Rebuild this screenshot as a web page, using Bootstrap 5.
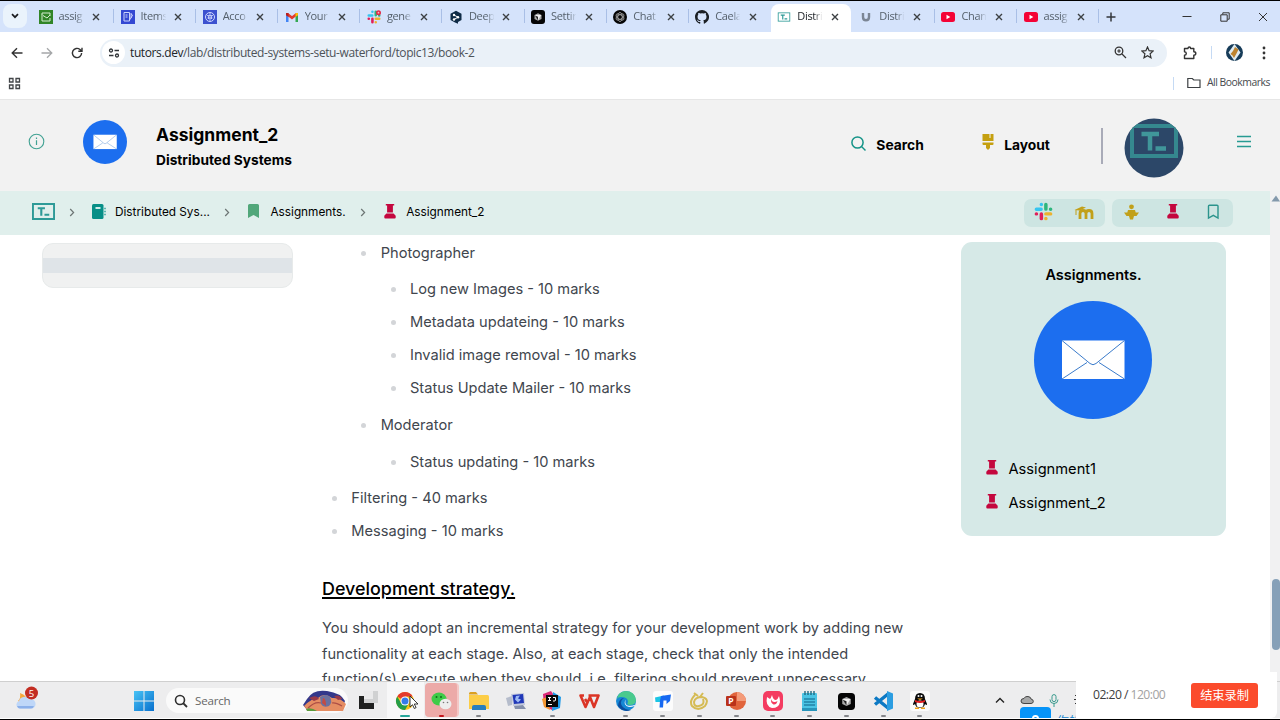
<!DOCTYPE html>
<html lang="en">
<head>
<meta charset="utf-8">
<meta name="viewport" content="width=device-width, initial-scale=1">
<title>Assignment_2 - Distributed Systems</title>
<link href="https://cdn.jsdelivr.net/npm/bootstrap@5.3.0/dist/css/bootstrap.min.css" rel="stylesheet">
<style>
html,body{height:720px;overflow:hidden}
body{font-family:Inter,sans-serif;font-size:14.67px;line-height:1.5;color:#000;background:#000;width:1280px}
svg{display:block;flex:none}
.sys{font-family:"Open Sans","Noto Sans",sans-serif}
.screen{height:717.5px;margin-top:1px;background:#fff}
/* browser chrome */
.tabstrip{height:31px;background:#d5e3fb;padding-left:2px}
.tabmenu{width:24px;height:24px;margin:3px 5px 0 1px;background:#eaf3fc;border-radius:8px}
.tab{width:82.1px;height:31px;padding-left:6.5px;font-size:11px;letter-spacing:-.35px;color:#55606b;flex:none;position:relative}
.tab span{width:26px;margin-left:6px;overflow:hidden;white-space:nowrap;-webkit-mask-image:linear-gradient(90deg,#000 65%,transparent 98%);mask-image:linear-gradient(90deg,#000 65%,transparent 98%)}
.tab .x{margin-left:7.5px}
.tab::after{content:"";position:absolute;right:0;top:8px;height:14px;width:1px;background:#a9bfe6}
.tab.on{background:#fff;border-radius:8px 8px 0 0;height:28px;margin-top:3px;color:#202429;width:80px;margin-right:2px;margin-left:0}
.tab.on>*{margin-top:-3px}
.tab.on::after,.tab.pre::after{display:none}
.toolbar{height:41px;padding:0 11px}
.urlbar{height:28px;width:1067px;border-radius:14px;background:#eaf1f8;margin-left:17px;padding-left:2px;padding-right:13px}
.site{width:23px;height:23px;background:#fff}
.url{font-size:12px;letter-spacing:-.39px;color:#4d5358;margin-left:5px;margin-top:1px;white-space:nowrap}
.url b{font-weight:400;color:#202428}
.bookmarks{height:26.5px;border-bottom:1px solid #e6e6e6;padding:0 10px 5px 8px;font-size:10.4px;color:#46494d}
.bookmarks span{letter-spacing:-.48px}
.vline{width:1px;background:#c5daf4}
/* course header */
.course{height:91.5px;background:#f2f2f2;font-weight:700;font-size:13.8px}
.brandtext{margin-left:28.8px;width:680.7px;padding-top:21px}
.brandtext h1{font-size:17.5px;line-height:28px;font-weight:700;margin:0}
.brandtext p{font-size:13.7px;line-height:23px;margin:0}
.split{width:2px;height:36px;background:#a9abb8;margin-top:28px}
.trail{height:44px;background:#e0efec;width:1270px;padding-left:32px;font-size:11.8px;white-space:nowrap}
.trail .icon{margin-top:-4px}
.pill{height:28px;background:#cde5e2;border-radius:7px}
/* page */
.page{height:446px;overflow:hidden;width:1270px}
.toc{width:251px;height:45px;margin:7.500px 0 0 42px;border:1px solid #e7eaea;border-radius:11px;background:#f0f1f1;overflow:hidden}
.toc div{height:15px;margin-top:14px;background:#dfe4e8}
.prose{width:600px;margin-left:29px;padding-top:5.7px;font-size:14.62px;line-height:25.67px;color:#41464e;white-space:nowrap}
.prose ul{list-style:none;padding:0;margin:0}
.prose ul ul{padding-left:29.33px;margin-top:11px;margin-bottom:11px}
.prose li{position:relative;padding-left:29.33px;margin:7.33px 0}
.prose ul ul>li{padding-left:0}
.prose li::before{content:"";position:absolute;left:10px;top:10px;width:5px;height:5px;border-radius:50%;background:#d3d5d8}
.prose ul ul>li::before{left:-19.3px}
.prose li.parent::before{display:none}
.prose h3{font-size:17.9px;line-height:28px;font-weight:500;color:#000;text-decoration:underline;text-underline-offset:2px;text-decoration-thickness:1.5px;margin:29.8px 0 13.2px}
.prose p{font-size:14.59px}
.topic{width:265px;height:294px;margin:7.4px 0 0 39px;border-radius:11px;background:#d6e9e7;padding-top:21.8px}
.topic h2{font-size:14.5px;font-weight:600;line-height:22px;margin:0 0 14.5px;text-align:center}
.topic a{color:#000;text-decoration:none;height:33.5px;padding-left:25px}
.topic a svg{margin:-3px 10.5px 0 0}
.scrollcol{width:10px;height:490px;background:#f1f1f2}
.thumb{width:8px;height:71px;border-radius:4px;background:#86a0b8;margin:374px 0 0 2px}
/* desktop */
.taskbar{height:37px;background:#ededee;border-top:1px solid #cfcfcf;position:relative}
.find{width:182px;height:25px;border-radius:13px;background:#fafafa;font-size:11.6px;letter-spacing:-.2px;color:#666}
.app{width:36.75px;height:36px;flex:none;position:relative;padding-top:2px}
.app::after{content:"";position:absolute;bottom:1px;width:5px;height:2px;border-radius:1px;background:#84868a}
.app.none::after{display:none}
.app.cur{background:#f7f7f8}
.app.cur::after{width:10px;background:#26a69a}
.app.hot{background:#ecaaa8;border-radius:4px;border-right:2px solid #f4c7c5;margin:0 1.4px 0 1.4px;width:34px;height:34px}
.app.hot::after{background:#c4161c;bottom:0}
.pointer{left:409px;top:13px}
.rec{position:absolute;left:1076px;top:-10px;width:201px;height:46px;background:#fff;border-radius:0 0 6px 0;font-size:12.2px;letter-spacing:-.55px;color:#3d3d3d;padding:2px 19px 2px 17px}
.rec button{width:67px;height:25px;border:0;border-radius:3px;background:#fb4b2c;color:#fff;font:12.2px/25px "Noto Sans CJK SC",sans-serif;letter-spacing:0;padding:0}
.toast-peek{position:absolute;left:1020px;top:25px;width:130px;height:11px;overflow:hidden;color:#1684cd;font:12px/18px "Noto Sans CJK SC",sans-serif}
.toast-peek i{width:31px;height:22px;border-radius:4px;background:#0794f8;flex:none}
.toast-peek i::before{content:"";display:block;width:7px;height:7px;margin:8px auto;border:2px solid #fff;border-radius:50%}
.toast-peek span{margin:5px 0 0 6px}
</style>
<script src="https://cdn.jsdelivr.net/npm/bootstrap@5.3.0/dist/js/bootstrap.bundle.min.js"></script>
</head>
<body>
<svg width="0" height="0" class="position-absolute">
<defs>
<symbol id="x" viewBox="0 0 8 8"><path d="M1 1l6 6M7 1L1 7" stroke="#3c4043" stroke-width="1.4"/></symbol>
<symbol id="slack" viewBox="0 0 24 24"><g fill="none" stroke-width="4.400" stroke-linecap="round"><path stroke="#36c5f0" d="M3 9.300h6M9.300 3v.1"/><path stroke="#2eb67d" d="M15 3v6M21 9.300h-.1"/><path stroke="#ecb22e" d="M15 15h6M15 21v-.1"/><path stroke="#e01e5a" d="M9.300 15v6M3 15h.1"/></g></symbol>
<symbol id="flask" viewBox="0 0 12 15"><path fill="#c4073e" d="M1.800 0h8.400v1.600H8.900v6.800H3.100V1.600H1.800zM2.400 9.400h7.200l2.100 2.400v1.800q0 1-1 1H1.300q-1 0-1-1v-1.800z"/></symbol>
<symbol id="env" viewBox="0 0 118 118"><circle cx="59" cy="59" r="59" fill="#1c6eef"/><path fill="#fff" d="M28 39.500h62.500v38.500H28z"/><path fill="none" stroke="#3a7bcb" d="M28 39.500l28 23q3 2.500 6 0l28.500-23M28 78l25-16.500M90.500 78L65 61.500"/></symbol>
<symbol id="tut" viewBox="0 0 24 18"><path fill="none" stroke="#2d9a97" stroke-width="2" d="M1 1h22v16H1z"/><path fill="none" stroke="#2d9a97" stroke-width="2.200" d="M6 5.500h7.500M9.700 5v8.500M13 12.500h5"/></symbol>
<symbol id="yt" viewBox="0 0 14 10"><rect width="14" height="10" rx="2.5" fill="#f40335"/><path fill="#fff" d="M5.500 2.800v4.400L9.300 5z"/></symbol>
<symbol id="cursorapp" viewBox="0 0 14 14"><rect width="14" height="14" rx="3" fill="#050505"/><path fill="#aaa" d="M3.500 4.900L7 3.300l3.500 1.600v4.200L7 10.800 3.500 9.100z"/><path fill="#f0f0f0" d="M4 5h6.200L7.200 10z"/><path fill="#222" d="M4 5.500l3 1.300v3.500z"/></symbol>
<symbol id="chev" viewBox="0 0 6 9"><path d="M1.200 1l3.400 3.500L1.200 8" fill="none" stroke="#6c7574" stroke-width="1.200"/></symbol>
</defs>
</svg>
<div class="screen">
<header class="sys">
  <div class="tabstrip d-flex">
    <div class="tabmenu d-flex align-items-center justify-content-center"><svg width="8" height="6"><path d="M1 1.200l3 3 3-3" fill="none" stroke="#1b1c1e" stroke-width="1.700"/></svg></div>
    <div class="tab d-flex align-items-center"><svg width="14" height="14"><path fill="#318527" d="M0 0h14v14H0z"/><path d="M3 4.500V11h8V8M3 5V3h8v3M4 5.500l4 2.500 3-3" fill="none" stroke="#d5ecd0"/></svg><span>assig</span><svg class="x" width="8" height="8"><use href="#x"/></svg></div>
    <div class="tab d-flex align-items-center"><svg width="14" height="14"><path fill="#3448d2" d="M0 0h14v14H0z"/><path d="M3 2.500h5.500V11H3zM4.500 5h2M4.500 7h2M10 3v5l-1.500 2M10 4l1.500 1-1.500 3" fill="none" stroke="#cbd2fb"/></svg><span>Items</span><svg class="x" width="8" height="8"><use href="#x"/></svg></div>
    <div class="tab d-flex align-items-center"><svg width="14" height="14"><path fill="#3d52cf" d="M0 0h14v14H0z"/><circle cx="7" cy="7" r="4.500" fill="none" stroke="#d3daff"/><path d="M4 5.500h6M4.500 8h5M7 3v8M5.500 6v3M8.500 6v3" stroke="#d3daff" stroke-width=".8"/></svg><span>Acco</span><svg class="x" width="8" height="8"><use href="#x"/></svg></div>
    <div class="tab d-flex align-items-center"><svg width="14" height="14"><path fill="#4285f4" d="M1 4h2.500v8H1z"/><path fill="#34a853" d="M10.500 5H13v7h-2.500z"/><path d="M2.200 4L7 7.800 11.800 4" fill="none" stroke="#e33b2e" stroke-width="2.600"/><path fill="#b9201d" d="M1 3h2.500v4L1 5.200z"/><path fill="#fbbc04" d="M13 3h-2.500v4L13 5.200z"/></svg><span>Your</span><svg class="x" width="8" height="8"><use href="#x"/></svg></div>
    <div class="tab d-flex align-items-center"><svg width="14" height="14"><use href="#slack"/><circle cx="11.500" cy="2.700" r="2.500" fill="#e22945"/><circle cx="11.500" cy="2.700" r=".9" fill="#f5b9c1"/></svg><span>gene</span><svg class="x" width="8" height="8"><use href="#x"/></svg></div>
    <div class="tab d-flex align-items-center"><svg width="14" height="14"><path fill="#0f2b46" d="M7 .8l5.500 3v6.200L9 12v1.800L6 12.500 1.500 10V3.800z"/><path d="M5 5l4 2.200L5 9.500" fill="none" stroke="#fff"/><circle cx="5" cy="5" r="1.200" fill="#fff"/><circle cx="9" cy="7.200" r="1.200" fill="#fff"/><circle cx="5" cy="9.500" r="1.200" fill="#fff"/></svg><span>Deep</span><svg class="x" width="8" height="8"><use href="#x"/></svg></div>
    <div class="tab d-flex align-items-center"><svg width="14" height="14"><use href="#cursorapp"/></svg><span>Settir</span><svg class="x" width="8" height="8"><use href="#x"/></svg></div>
    <div class="tab d-flex align-items-center"><svg width="14" height="14"><circle cx="7" cy="7" r="7" fill="#050505"/><g fill="none" stroke="#aaa" stroke-width=".8"><ellipse cx="7" cy="7" rx="2.200" ry="4.500"/><ellipse cx="7" cy="7" rx="2.200" ry="4.500" transform="rotate(60 7 7)"/><ellipse cx="7" cy="7" rx="2.200" ry="4.500" transform="rotate(120 7 7)"/></g></svg><span>Chat</span><svg class="x" width="8" height="8"><use href="#x"/></svg></div>
    <div class="tab pre d-flex align-items-center"><svg width="14" height="14" viewBox="0 0 16 16"><path fill="#1b1f24" d="M8 0C3.580 0 0 3.580 0 8c0 3.540 2.290 6.530 5.470 7.590.4.070.55-.17.55-.38v-1.490c-2.010.37-2.530-.49-2.690-.94-.09-.23-.48-.94-.82-1.130-.28-.15-.68-.52-.01-.53.63-.01 1.080.58 1.230.82.72 1.210 1.870.87 2.330.66.07-.52.28-.87.51-1.070-1.780-.2-3.640-.89-3.640-3.950 0-.87.31-1.590.82-2.150-.08-.2-.36-1.020.08-2.120 0 0 .67-.21 2.200.82a7.500 7.500 0 0 1 4 0c1.530-1.040 2.200-.82 2.200-.82.44 1.100.16 1.920.08 2.120.51.56.82 1.270.82 2.150 0 3.070-1.870 3.750-3.650 3.950.29.25.54.73.54 1.480v2.200c0 .21.15.46.55.38A8 8 0 0 0 8 0z"/></svg><span>Caela</span><svg class="x" width="8" height="8"><use href="#x"/></svg></div>
    <div class="tab on d-flex align-items-center"><svg width="14" height="14" viewBox="-1 -3 26 24"><use href="#tut" width="24" height="18"/></svg><span>Distri</span><svg class="x" width="8" height="8"><use href="#x"/></svg></div>
    <div class="tab d-flex align-items-center"><svg width="14" height="14"><path d="M4 3v4q0 3.300 3 3.300T10 7V3" fill="none" stroke="#7b8594" stroke-width="2.400"/></svg><span>Distri</span><svg class="x" width="8" height="8"><use href="#x"/></svg></div>
    <div class="tab d-flex align-items-center"><svg width="14" height="10"><use href="#yt"/></svg><span>Chan</span><svg class="x" width="8" height="8"><use href="#x"/></svg></div>
    <div class="tab d-flex align-items-center"><svg width="14" height="10"><use href="#yt"/></svg><span>assig</span><svg class="x" width="8" height="8"><use href="#x"/></svg></div>
    <div class="d-flex align-items-center flex-grow-1">
      <svg style="margin-left:7px" width="10" height="10"><path d="M5 .5v9M.5 5h9" stroke="#33373c" stroke-width="1.500"/></svg>
      <svg class="ms-auto" width="10" height="10"><path d="M.5 4.500h9" stroke="#333"/></svg>
      <svg style="margin-left:28px" width="10" height="10"><path d="M.8 2.800h6.400v6.400H.8zM2.800 2.500V.8h6.400v6.400H7.500" fill="none" stroke="#333"/></svg>
      <svg style="margin-left:28px;margin-right:12px" width="10" height="10"><path d="M1 1l8 8M9 1L1 9" stroke="#333"/></svg>
    </div>
  </div>
  <div class="toolbar d-flex align-items-center">
    <svg width="12" height="12"><path d="M11.500 6H1.500M6 1.200L1.200 6 6 10.800" fill="none" stroke="#333" stroke-width="1.400"/></svg>
    <svg style="margin-left:18px" width="12" height="12"><path d="M.5 6h10M6 1.200L10.800 6 6 10.800" fill="none" stroke="#a5a7a9" stroke-width="1.300"/></svg>
    <svg style="margin-left:18px" width="12" height="12"><path d="M10.600 6A4.600 4.600 0 1 1 9 2.500L11 4.300M11 .8v3.500H7.300" fill="none" stroke="#333" stroke-width="1.400"/></svg>
    <div class="urlbar d-flex align-items-center">
      <div class="site rounded-circle d-flex align-items-center justify-content-center"><svg width="12" height="10"><g fill="none" stroke="#303438" stroke-width="1.300"><circle cx="3" cy="2.500" r="1.500"/><path d="M6.500 2.500H11M1 7.500h4.500"/><circle cx="9" cy="7.500" r="1.500"/></g></svg></div>
      <div class="url"><b>tutors.dev</b>/lab/distributed-systems-setu-waterford/topic13/book-2</div>
      <svg class="ms-auto" width="13" height="13"><circle cx="5" cy="5" r="3.800" fill="none" stroke="#333" stroke-width="1.300"/><path d="M8 8l4 4M5 3.200v3.600M3.200 5h3.600" stroke="#333" stroke-width="1.200"/></svg>
      <svg style="margin-left:14px" width="13" height="13"><path d="M6.500 1l1.600 3.700 4 .4-3 2.700.9 4-3.500-2.100L3 11.800l.9-4-3-2.700 4-.4z" fill="none" stroke="#333" stroke-width="1.200"/></svg>
    </div>
    <svg style="margin-left:16px" width="14" height="14"><path d="M1.500 2.500H5Q5 1 6.300 1t1.300 1.500h3.200v3.300q2 0 2 1.700t-2 1.700v3.300H1.500V9.300q1.800-.3 1.800-1.800T1.500 5.800z" fill="none" stroke="#333" stroke-width="1.400" stroke-linejoin="round"/></svg>
    <div class="vline" style="height:13px;margin-left:14px"></div>
    <svg style="margin-left:14px" width="17" height="17"><circle cx="8.500" cy="8.500" r="8.500" fill="#173c59"/><path fill="#dfecf2" d="M8.500 0l6 8.500-6 8.500-6-8.500z"/><path fill="#bd8430" d="M9 3l3.500 2.500-2 4-2.500 4.500-1.500-2.500L4.500 10l2.500-3z"/></svg>
    <svg style="margin-left:19px" width="4" height="14"><g fill="#333"><circle cx="2" cy="2" r="1.400"/><circle cx="2" cy="7" r="1.400"/><circle cx="2" cy="12" r="1.400"/></g></svg>
  </div>
  <div class="bookmarks d-flex align-items-center">
    <svg width="13" height="13"><path d="M1.500 1.500h3.500V5H1.500zM8 1.500h3.500V5H8zM1.500 8h3.500v3.500H1.500zM8 8h3.500v3.500H8z" fill="none" stroke="#424548" stroke-width="1.300"/></svg>
    <div class="vline ms-auto" style="height:13px"></div>
    <svg style="margin-left:13px" width="14" height="12"><path d="M.8 10.500v-9h4.500L6.800 3H13v7.500z" fill="none" stroke="#3c4043" stroke-width="1.200"/></svg>
    <span style="margin-left:6px">All Bookmarks</span>
  </div>
</header>
<div class="course d-flex">
  <svg style="margin:33.500px 0 0 28px" width="17" height="17"><circle cx="8.500" cy="8.500" r="7.300" fill="none" stroke="#42a293" stroke-width="1.100"/><path d="M8.500 7.300V12M8.500 4.600v1.300" stroke="#42a293" stroke-width="1.200"/></svg>
  <svg style="margin:20.500px 0 0 38.300px" width="44" height="44"><use href="#env"/></svg>
  <div class="brandtext"><h1>Assignment_2</h1><p>Distributed Systems</p></div>
  <div class="d-flex" style="margin-left:14.500px;padding-top:35px;width:130.500px"><svg width="17" height="17"><circle cx="7.500" cy="7.500" r="5.600" fill="none" stroke="#159488" stroke-width="1.500"/><path d="M11.500 11.500l4 4" stroke="#159488" stroke-width="1.500"/></svg><span style="margin-left:9px">Search</span></div>
  <div class="d-flex" style="padding-top:35px;width:120px"><svg style="margin-top:-1px" width="14" height="16"><path fill="#c5a010" d="M1.500 0h7v4h1V0h3v7h-11zM1.500 8.500h11V10q0 1-1 1H9v3l-2 2-2-2v-3H2.500q-1 0-1-1z"/></svg><span style="margin-left:9.500px">Layout</span></div>
  <div class="split ms-auto"></div>
  <svg style="margin:18.800px 0 0 21.500px" width="60" height="60"><defs><clipPath id="av"><circle cx="30" cy="30" r="29.500"/></clipPath></defs><g clip-path="url(#av)"><path fill="#2c4768" d="M0 0h60v60H0z"/><path d="M8 8h44v30H8z" fill="none" stroke="#35888f" stroke-width="4"/><path d="M17.500 16h17.500M26 15v17.500M31.500 30.500h10.500" stroke="#40969a" stroke-width="4.500"/></g></svg>
  <svg style="margin:35.500px 29px 0 53px" width="14" height="13"><path d="M0 1.500h14M0 6.500h14M0 11.500h14" stroke="#279b92" stroke-width="1.400"/></svg>
</div>
<div class="d-flex">
<main>
  <nav class="trail d-flex align-items-center">
    <svg class="icon" width="23" height="17" preserveAspectRatio="none" viewBox="0 0 24 18"><use href="#tut" width="24" height="18"/></svg>
    <svg style="margin:-2px 17px 0 14px" width="6" height="9"><use href="#chev"/></svg>
    <svg class="icon" style="margin-right:8px" width="15" height="15"><path fill="#078f87" d="M1.500 0H10q1.500 0 1.500 1.500v12Q11.500 15 10 15H1.500Q0 15 0 13.500v-12Q0 0 1.500 0z"/><path fill="#d1ecea" d="M3.500 3h5v2h-5z"/><path d="M12 4.500h2M12 7.500h2M12 10.500h2" stroke="#5cb7b1" stroke-width="1.500"/></svg>
    <span>Distributed Sys...</span>
    <svg style="margin:-2px 18px 0 14.500px" width="6" height="9"><use href="#chev"/></svg>
    <svg class="icon" width="11" height="14"><path fill="#51a77a" d="M0 1.500Q0 0 1.500 0h8Q11 0 11 1.500V14l-5.500-3L0 14z"/></svg>
    <span style="margin-left:11px">Assignments.</span>
    <svg style="margin:-2px 18px 0 14.500px" width="6" height="9"><use href="#chev"/></svg>
    <svg class="icon" width="12" height="15"><use href="#flask"/></svg>
    <span style="margin-left:10px">Assignment_2</span>
    <div class="pill d-flex align-items-center ms-auto" style="width:81px;padding-left:9.500px"><svg style="margin-top:-3px" width="19" height="19"><use href="#slack"/></svg><svg style="margin-left:21.500px;margin-top:-2px" width="20" height="15"><path d="M.5 5L8 1.500l4 1L5.500 5.500z" fill="#c2a019"/><path d="M2 5v5" stroke="#c2a019"/><path d="M6 14V8.500Q6 5.500 9 5.500t3 3V14M12 8.500q0-3 3-3t3 3V14" fill="none" stroke="#c2a019" stroke-width="2.800"/></svg></div>
    <div class="pill d-flex align-items-center" style="width:121px;margin:0 37px 0 7px;padding-left:12px"><svg style="margin-top:-2px" width="15" height="16"><circle cx="7.500" cy="2.800" r="2.400" fill="#c1a019"/><path fill="#c1a019" d="M4 6h7l.7 2.500H15L12.500 12H10l-1 3.500H6L5 12H2.500L0 8.500h3.300z"/></svg><svg style="margin:-3px 0 0 27.500px" width="12" height="15"><use href="#flask"/></svg><svg style="margin:-2px 0 0 28px" width="13" height="16"><path d="M1.500 14V2q0-.8 1-.8h7.500q1 0 1 .8v12l-4.700-2.700z" fill="none" stroke="#2b948c" stroke-width="1.400"/></svg></div>
  </nav>
  <div class="page d-flex align-items-start">
    <div class="toc flex-shrink-0"><div></div></div>
    <article class="prose flex-shrink-0">
      <ul>
        <li class="parent m-0">
          <ul class="mt-0">
            <li class="m-0">Photographer
              <ul>
                <li>Log new Images - 10 marks</li>
                <li>Metadata updateing - 10 marks</li>
                <li>Invalid image removal - 10 marks</li>
                <li class="mb-0">Status Update Mailer - 10 marks</li>
              </ul>
            </li>
            <li class="m-0">Moderator
              <ul><li class="mb-0">Status updating - 10 marks</li></ul>
            </li>
          </ul>
        </li>
        <li class="mt-0">Filtering - 40 marks</li>
        <li>Messaging - 10 marks</li>
      </ul>
      <h3>Development strategy.</h3>
      <p class="m-0">You should adopt an incremental strategy for your development work by adding new<br>functionality at each stage. Also, at each stage, check that only the intended<br>function(s) execute when they should, i.e. filtering should prevent unnecessary</p>
    </article>
    <aside class="topic flex-shrink-0">
      <h2>Assignments.</h2>
      <svg style="margin:0 0 34px 73px" width="118" height="118"><use href="#env"/></svg>
      <a href="#" class="d-flex align-items-center"><svg width="12" height="15"><use href="#flask"/></svg>Assignment1</a>
      <a href="#" class="d-flex align-items-center"><svg width="12" height="15"><use href="#flask"/></svg>Assignment_2</a>
    </aside>
  </div>
</main>
<div class="scrollcol"><svg width="10" height="14"><path fill="#8499ac" d="M1.500 10.500L6 4.500l4 6z"/></svg><div class="thumb"></div></div>
</div>
<footer class="taskbar d-flex align-items-center sys">
  <svg style="margin-left:14px" width="26" height="30"><path fill="#f7a73c" d="M6 8q4 1 7 5l-5 6-4-3q3-3 2-8z"/><path fill="#bfd7f8" d="M5 23.500a4 4 0 0 1 0-7.500 5.500 5.500 0 0 1 10-1.500 4.500 4.500 0 0 1 3.500 9z"/><path fill="#8bb0ea" d="M3 21h17q-1 2.500-3 2.500H6q-2 0-3-2.500z"/><circle cx="17.500" cy="8" r="6.500" fill="#c32d22"/><text x="17.500" y="11.500" font-size="9.500" text-anchor="middle" fill="#fff">5</text></svg>
  <svg style="margin:2px 0 0 94px" width="20" height="20"><defs><linearGradient id="wn" x2="1" y2="1"><stop stop-color="#48c3f5"/><stop offset="1" stop-color="#086fcd"/></linearGradient></defs><path fill="url(#wn)" d="M0 0h9.500v9.500H0zM10.500 0H20v9.500h-9.500zM0 10.500h9.500V20H0zM10.500 10.500H20V20h-9.500z"/></svg>
  <div class="find d-flex align-items-center" style="margin:1px 0 0 12px;padding-left:8px"><svg width="14" height="14"><circle cx="6" cy="6" r="4.500" fill="none" stroke="#303030" stroke-width="1.600"/><path d="M9 9l4 4" stroke="#303030" stroke-width="1.800"/></svg><span style="margin:1px 0 0 7px">Search</span>
    <svg class="ms-auto" style="margin-right:2px" width="43" height="22"><path fill="#33388b" d="M4 9Q10-1 24 1t18 10l-4 10H5L0 15z"/><path fill="#e58d63" d="M1 16q8-8 14-8 6-6 14 0 8-1 14 6l-3 7H5z"/><path fill="#973948" d="M6 8q8-4 10 1l-5 2zM31 6q6-2 8 3l-4 1z"/><path d="M5 18q7-7 13-5M39 16q-7-4-10-3" stroke="#ad4e45" stroke-width="1.300" fill="none"/><path fill="#6c719e" d="M17 7q6-4 10 0 3 5-1 9-6 2-8-2z"/><path fill="#c54b43" d="M20 8q3 0 3 8l-4-3z"/><path fill="#5b9a3c" d="M3 19q5-2 11 2H4z"/></svg></div>
  <svg style="margin-left:10px" width="20" height="18"><path fill="#1f2020" d="M1 5h15v13H1z"/><path fill="#d0d1d2" d="M6 0h14v12H6z"/><path fill="#fff" d="M6 0h9v8H6z" opacity=".55"/></svg>
  <div class="d-flex align-items-center" style="margin-left:9px">
    <div class="app cur d-flex align-items-center justify-content-center"><svg width="20" height="20"><circle cx="10" cy="10" r="9" fill="#fbc116"/><path fill="#e33b2e" d="M10 10L2.200 5.500A9 9 0 0 1 17.800 5.500H10z"/><path fill="#259d48" d="M2.200 5.500A9 9 0 0 0 10 19l4-7H6z"/><circle cx="10" cy="10" r="4.500" fill="#fff"/><circle cx="10" cy="10" r="3.500" fill="#347be8"/></svg></div>
    <div class="app hot d-flex align-items-center justify-content-center"><svg width="21" height="18"><ellipse cx="8" cy="7" rx="7.500" ry="6.500" fill="#3fcb48"/><circle cx="5.500" cy="5" r="1" fill="#136d1b"/><circle cx="10" cy="5" r="1" fill="#136d1b"/><ellipse cx="14.500" cy="12" rx="6" ry="5.200" fill="#ededed"/><circle cx="12.500" cy="10.500" r=".8" fill="#777"/><circle cx="16.500" cy="10.500" r=".8" fill="#777"/></svg></div>
    <div class="app d-flex align-items-center justify-content-center"><svg width="20" height="18"><path fill="#dba021" d="M0 1.500Q0 0 1.500 0H7l2 2.500H0z"/><path fill="#fccd47" d="M0 3h18.500Q20 3 20 4.500V17H0z"/><path fill="#287fbd" d="M3 18v-3q0-2 2-2h10q2 0 2 2v3z"/></svg></div>
    <div class="app none d-flex align-items-center justify-content-center"><svg width="20" height="17"><path fill="#b5bccb" d="M0 5l6-2v9l-4 1z"/><path fill="#c3c9dc" d="M5 1l13-1 1 12-12 1z"/><path fill="#2038b8" d="M6.500 2L17 1l1 9-10 1z"/><path fill="#9db9f3" d="M10 3l4-.5-2 3 3 1-3 3-3-3z"/><path fill="#8590ab" d="M8 13l9-1 3 4H9z"/></svg></div>
    <div class="app d-flex align-items-center justify-content-center"><svg width="20" height="20"><path fill="#dc2b78" d="M1 3l8-3 7 10-6 9-8-4z"/><path fill="#229be8" d="M11 1l8 5-1 11-8 3z"/><path fill="#f39732" d="M0 8l5-2 3 13-6-3z"/><path fill="#090909" d="M4 4h12v12H4z"/><path d="M6 6.500h3M7.500 6v4M6 9.500h3M11 6.500h2.500V9q0 1.500-2.500 1M6 13.500h4" stroke="#fff" fill="none"/></svg></div>
    <div class="app none d-flex align-items-center justify-content-center"><svg width="21" height="15"><path fill="none" stroke="#db3526" stroke-width="2.600" stroke-linejoin="round" d="M5 1.500H1.500l5 11.500L11 3l4 10 4.500-11.500H9.500M6 5l2 3"/></svg></div>
    <div class="app d-flex align-items-center justify-content-center"><svg width="20" height="20"><circle cx="10" cy="10" r="10" fill="#1587d5"/><path fill="#49ca8d" d="M9 0q10 0 11 9 0 5-6 5-4 0-2-3Q12 6 5 6q-3 0-4 2Q2 1 9 0z"/><path fill="#0c4d9e" d="M8 7q-5 3-2 8 3 4 9 4-8 3-13-4Q3 7 8 7z"/><path fill="#f4f8fa" d="M10 8.500q-2 4 1.500 6 4 1 8-1l-1 1.500q-5 2-8 0-3.500-3-.5-6.500z"/></svg></div>
    <div class="app d-flex align-items-center justify-content-center"><svg width="20" height="20"><rect width="20" height="20" rx="3" fill="#fcfcfc"/><path fill="#1cc5e5" d="M2 6.500L11 4.500 8 11H2.500z"/><path fill="#1769f2" d="M8 5l10-1.500L17 10l-3.500 3V9.500h-3L10 16.500H6.500L7 9.500z"/></svg></div>
    <div class="app d-flex align-items-center justify-content-center"><svg width="20" height="20"><path d="M6 4q-6 6-3 11 6 6 13 0 5-7-3-9-7 0-8 5 0 5 5 4 6-1 4-7M5 2l4 3M14 2l-3 4" fill="none" stroke="#d5bb54" stroke-width="2"/></svg></div>
    <div class="app d-flex align-items-center justify-content-center"><svg width="20" height="20"><circle cx="11" cy="10" r="9" fill="#e1643c"/><path fill="#f49b79" d="M11 1a9 9 0 0 1 9 9h-9z"/><rect y="5" width="10" height="10" rx="1" fill="#ba321a"/><text x="5" y="13" font-size="8.500" font-weight="700" text-anchor="middle" fill="#fff">P</text></svg></div>
    <div class="app d-flex align-items-center justify-content-center"><svg width="20" height="20"><rect width="20" height="20" rx="5" fill="#f43c61"/><path fill="#fff" d="M4 6q-2 9 5 11 7 0 8-6 0-3-1-6-1 3-3 4-3 0-4-5-1 3-2 4z"/><path fill="#f43c61" d="M8 8q1 3.500 4 3 2-.5 2.500-1-1 4-4 3.500Q7.500 12 8 8z"/></svg></div>
    <div class="app d-flex align-items-center justify-content-center"><svg width="16" height="20"><rect y="2" width="15" height="18" rx="1" fill="#4ac4e4"/><path d="M2 8h11M2 11h11M2 14h11" stroke="#2283a6" stroke-width="1.400"/><path d="M3 0v4M6 0v4M9 0v4M12 0v4" stroke="#206982" stroke-width="1.400"/><path fill="#2795ba" d="M0 17h15v3H0z"/></svg></div>
    <div class="app d-flex align-items-center justify-content-center"><svg width="17" height="17"><use href="#cursorapp"/></svg></div>
    <div class="app d-flex align-items-center justify-content-center"><svg width="20" height="20"><path d="M15 3L2 13.500M2 6.500L15 17" stroke="#0c79c4" stroke-width="3.500"/><path fill="#2b9de1" d="M14 0l6 2.500v15L14 20z"/></svg></div>
    <div class="app d-flex align-items-center justify-content-center"><svg width="20" height="20"><rect width="20" height="20" rx="3" fill="#fbfbfb"/><path fill="#0b0b0b" d="M10 2q5 0 5 6l2 5q0 2-2 0-1 4-5 4t-5-4q-2 2-2 0l2-5q0-6 5-6z"/><ellipse cx="10" cy="13" rx="3.500" ry="3.500" fill="#fff"/><path fill="#e21e22" d="M5 9q5 2 10 0v2q-5 2-10 0z"/><path fill="#f2a51c" d="M7 7.500h6L10 9zM5 16.500h4V18H5zM11 16.500h4V18h-4z"/><circle cx="8.500" cy="5" r="1" fill="#fff"/><circle cx="11.500" cy="5" r="1" fill="#fff"/></svg></div>
  </div>
  <svg style="margin-left:57px" width="10" height="8"><path d="M1 6.500l4-4 4 4" fill="none" stroke="#222" stroke-width="1.400"/></svg>
  <svg style="margin-left:15px" width="14" height="10"><path d="M4 8.500Q1 8.500 1 6t3-2.500Q5 1 8 1.500t3 2.500q2.500.500 2.300 2.500T11 8.500z" fill="#a7a8a8" stroke="#444"/></svg>
  <svg style="margin-left:15px" width="10" height="13"><rect x="3" y=".6" width="4" height="7" rx="2" fill="none" stroke="#38998c"/><path d="M1 5.500q0 4 4 4t4-4M5 9.500V13" fill="none" stroke="#38998c"/></svg>
  <svg style="margin-left:15px" width="4" height="12"><path d="M1 1.500h3M0 5.500h4M1 9.500h3" stroke="#333" stroke-width="1.200"/></svg>
  <svg class="pointer position-absolute" width="10" height="15"><path d="M1 1v11l2.500-2.300 1.800 3.800 1.800-.9-1.800-3.600H9z" fill="#fff" stroke="#222" stroke-width=".9"/></svg>
  <div class="toast-peek d-flex"><i></i><span>你的屏幕会被录</span></div>
  <div class="rec d-flex align-items-center justify-content-between"><span>02:20 / <span style="color:#a2a2a2">120:00</span></span><button>结束录制</button></div>
</footer>
</div>
</body>
</html>
